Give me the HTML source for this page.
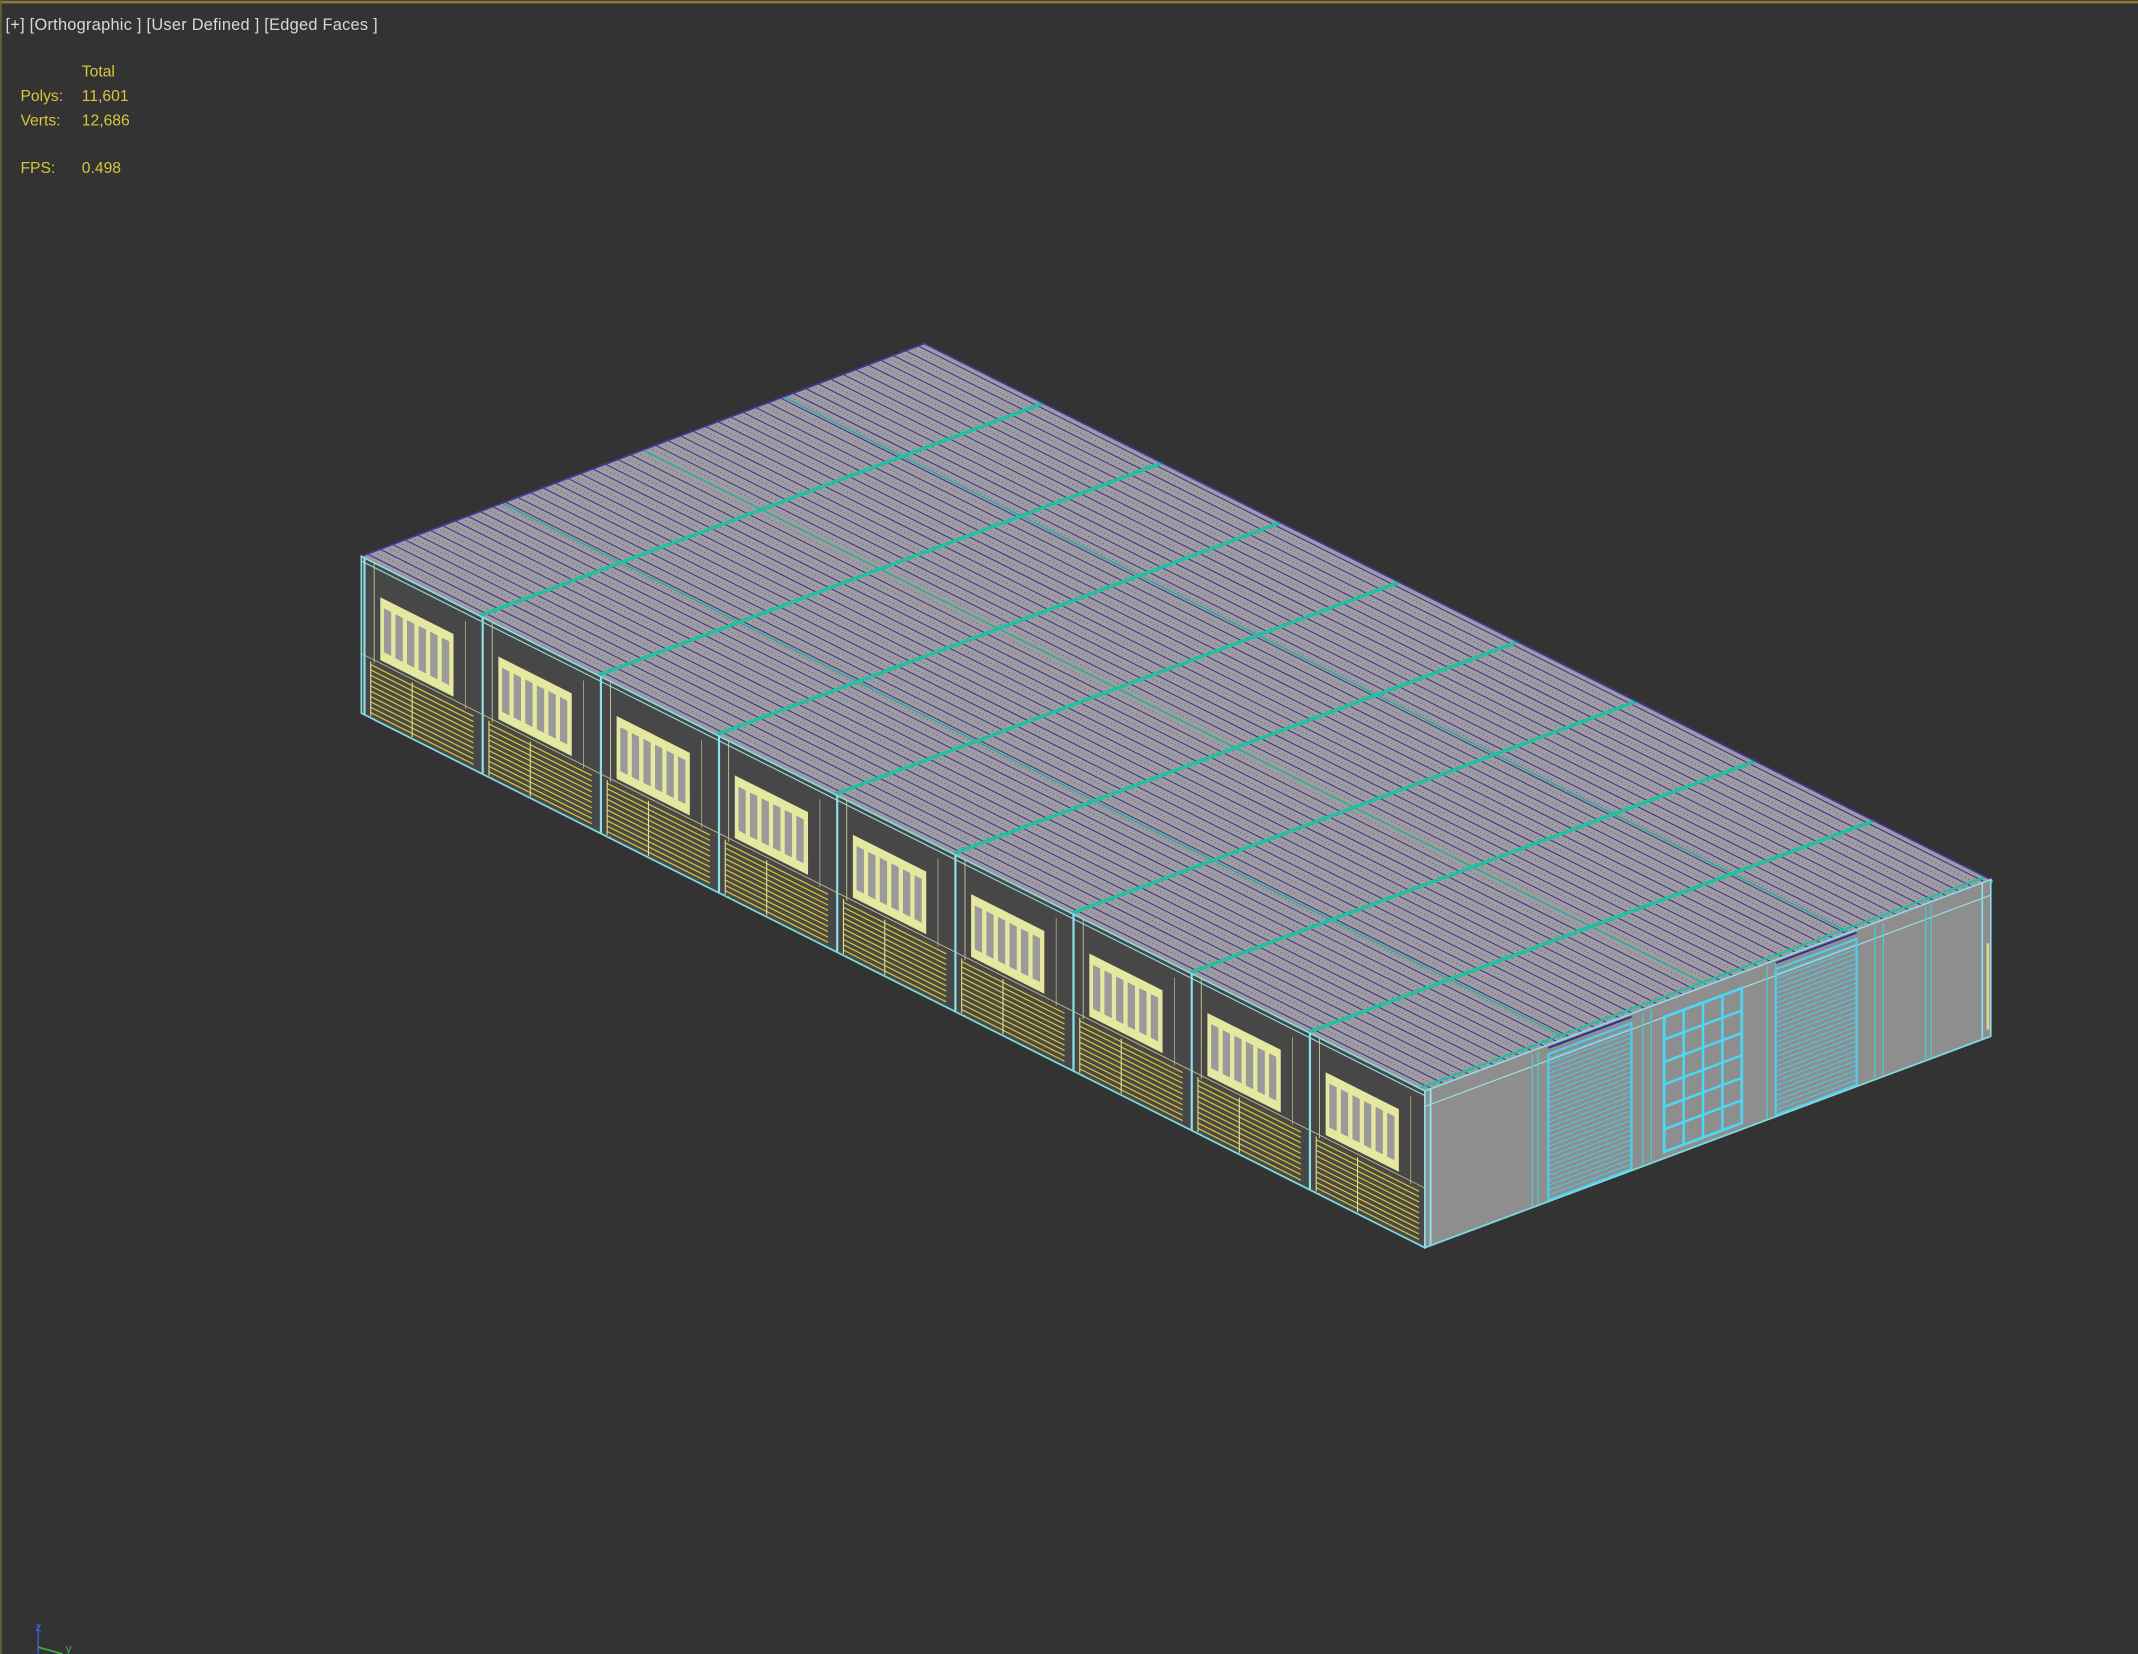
<!DOCTYPE html>
<html><head><meta charset="utf-8"><style>
html,body{margin:0;padding:0;background:#333333;width:2138px;height:1654px;overflow:hidden}
svg{display:block}
text{font-family:"Liberation Sans",sans-serif}
</style></head><body>
<svg id="s" width="2138" height="1654" viewBox="0 0 1568 1213" xmlns="http://www.w3.org/2000/svg">
<rect width="1568" height="1213" fill="#333333"/>
<line x1="0" y1="1.5" x2="1568" y2="1.5" stroke="#8c7c36" stroke-width="2"/>
<line x1="0.7" y1="0" x2="0.7" y2="1213" stroke="#6c6232" stroke-width="1.2"/>
<text x="4" y="22" font-size="12" fill="#d8d8d8" textLength="273">[+] [Orthographic ] [User Defined ] [Edged Faces ]</text>
<g font-size="11.5" fill="#d6c63a">
<text x="60" y="56">Total</text>
<text x="15" y="74">Polys:</text><text x="60" y="74">11,601</text>
<text x="15" y="92">Verts:</text><text x="60" y="92">12,686</text>
<text x="15" y="127">FPS:</text><text x="60" y="127">0.498</text>
</g>
<g id="b"></g>
<line x1="28" y1="1192" x2="28" y2="1213" stroke="#3a55d0" stroke-width="1.2"/>
<line x1="28" y1="1208" x2="46" y2="1213" stroke="#40b040" stroke-width="1.2"/>
<text x="26" y="1196" font-size="9" fill="#4a66e0">z</text>
<text x="48" y="1212" font-size="9" fill="#40b040">y</text>
</svg>
<script>
var g=document.getElementById('b'),h='';
var T=[678,252],L=[265,408],F=[1045,800],R=[1460,645],H=115;
function lerp(a,b,t){return [a[0]+(b[0]-a[0])*t,a[1]+(b[1]-a[1])*t];}
function poly(pts,fill,stroke,sw){return '<polygon points="'+pts.map(p=>p[0].toFixed(1)+','+p[1].toFixed(1)).join(' ')+'" fill="'+fill+'" stroke="'+(stroke||'none')+'" stroke-width="'+(sw||1)+'"/>';}
function ln(a,b,c,w,d){return '<line x1="'+a[0].toFixed(1)+'" y1="'+a[1].toFixed(1)+'" x2="'+b[0].toFixed(1)+'" y2="'+b[1].toFixed(1)+'" stroke="'+c+'" stroke-width="'+w+'"'+(d?' stroke-dasharray="'+d+'"':'')+'/>';}
function W(u,v){var p=lerp(L,F,u);return [p[0],p[1]+v*H];}
function Q(u,v){var p=lerp(F,R,u);return [p[0],p[1]+v*H];}
// roof
h+=poly([T,L,F,R],'#9e9c9e');
var N=90;
for(var i=1;i<N;i++){var t=i/N;var a=lerp(L,T,t),b=lerp(F,R,t);
 h+= (i%2)?ln(a,b,'#3c2c9a',0.75):ln(a,b,'#6a5ab0',0.6,'1 2');}
[0.25,0.5,0.75].forEach(function(t){h+=ln(lerp(L,T,t),lerp(F,R,t),'#1fb0a0',1);});
for(var k=1;k<=9;k++){var a=lerp(L,F,k*0.1113),b=lerp(T,R,k*0.1113);h+=ln(a,b,'#20c0a0',2.6);}
h+=ln(lerp(L,F,0.995),lerp(T,R,0.995),'#20c0a0',1.5);
h+=poly([T,L,F,R],'none','#4838a0',1.2);
// left wall
h+=poly([L,F,W(1,1),W(0,1)],'#474747','#8ee0e8',1.2);
h+=ln(W(0,0.03),W(1,0.03),'#9adfe0',0.8);
var bw=1/9;
for(var k=0;k<9;k++){var u0=k*bw;
 h+=ln(W(u0+0.003,0),W(u0+0.003,1),'#8ee0e8',1.6);
 h+=ln(W(u0+0.012,0),W(u0+0.012,1),'#cfd6a0',0.6);
 var w0=u0+bw*0.16,w1=u0+bw*0.78,v0=0.2,v1=0.6;
 h+=poly([W(w0,v0),W(w1,v0),W(w1,v1),W(w0,v1)],'#e6e8a0');
 for(var j=0;j<6;j++){var a0=w0+(w1-w0)*(0.05+j*0.158),a1=a0+(w1-w0)*0.1;
  h+=poly([W(a0,v0+0.06),W(a1,v0+0.06),W(a1,v1-0.06),W(a0,v1-0.06)],'#9a9a9a');}
 var l0=u0+bw*0.08,l1=u0+bw*0.95;
 h+=poly([W(l0,0.64),W(l1,0.64),W(l1,0.99),W(l0,0.99)],'#4a4a44');
 for(var j=0;j<10;j++){var v=0.66+j*0.034;h+=ln(W(l0,v),W(l1,v),'#d8c040',0.9);}
 h+=ln(W(l0,0.64),W(l0,0.99),'#e0e090',0.8);h+=ln(W(l0+bw*0.35,0.64),W(l0+bw*0.35,0.99),'#e0e090',0.8);
 h+=ln(W(u0+bw*0.88,0.08),W(u0+bw*0.88,0.64),'#b0b080',0.6);
 h+=ln(W(u0,0.62),W(u0+bw,0.62),'#c8c890',0.6);
}
h+=ln(W(0,1),W(1,1),'#7ad8e0',1.2);
// right wall
h+=poly([F,R,Q(1,1),Q(0,1)],'#8e8e8e','#8ee0e8',1.2);
h+=ln(Q(0,0.1),Q(1,0.1),'#9ee4ee',0.8);
h+=ln(Q(0.01,0),Q(0.01,1),'#8ee0e8',1.5);h+=ln(Q(0.985,0),Q(0.985,1),'#8ee0e8',1.2);
function rq(u0,u1,v0,v1,c,sw){return poly([Q(u0,v0),Q(u1,v0),Q(u1,v1),Q(u0,v1)],'none',c,sw);}
[0.19,0.2,0.385,0.4,0.605,0.62,0.795,0.81,0.885,0.895].forEach(function(u){h+=ln(Q(u,0.02),Q(u,0.99),'#50c8c8',1);});
[[0.218,0.365],[0.62,0.763]].forEach(function(d){
 h+=rq(d[0],d[1],0.06,0.99,'#4cd0ee',1.6);
 for(var j=1;j<30;j++){var v=0.06+j*0.031;h+=ln(Q(d[0],v),Q(d[1],v),'#4cc8e4',0.8);}
 h+=ln(Q(d[0],0.02),Q(d[1],0.02),'#2a2a90',1.3);
});
var g0=0.423,g1=0.56;
h+=rq(g0,g1,0.1,0.96,'#4cd8f4',2);
for(var j=1;j<6;j++){h+=ln(Q(g0,0.1+j*0.143),Q(g1,0.1+j*0.143),'#4cd8f4',1.8);}
for(var j=1;j<4;j++){h+=ln(Q(g0+(g1-g0)*j/4,0.1),Q(g0+(g1-g0)*j/4,0.96),'#4cd8f4',1.8);}
h+=ln(Q(0,1),Q(1,1),'#7ad8e0',1.2);
h+=ln(Q(0.995,0.4),Q(0.995,0.95),'#d8d890',2);
g.innerHTML=h;
</script>
</body></html>
